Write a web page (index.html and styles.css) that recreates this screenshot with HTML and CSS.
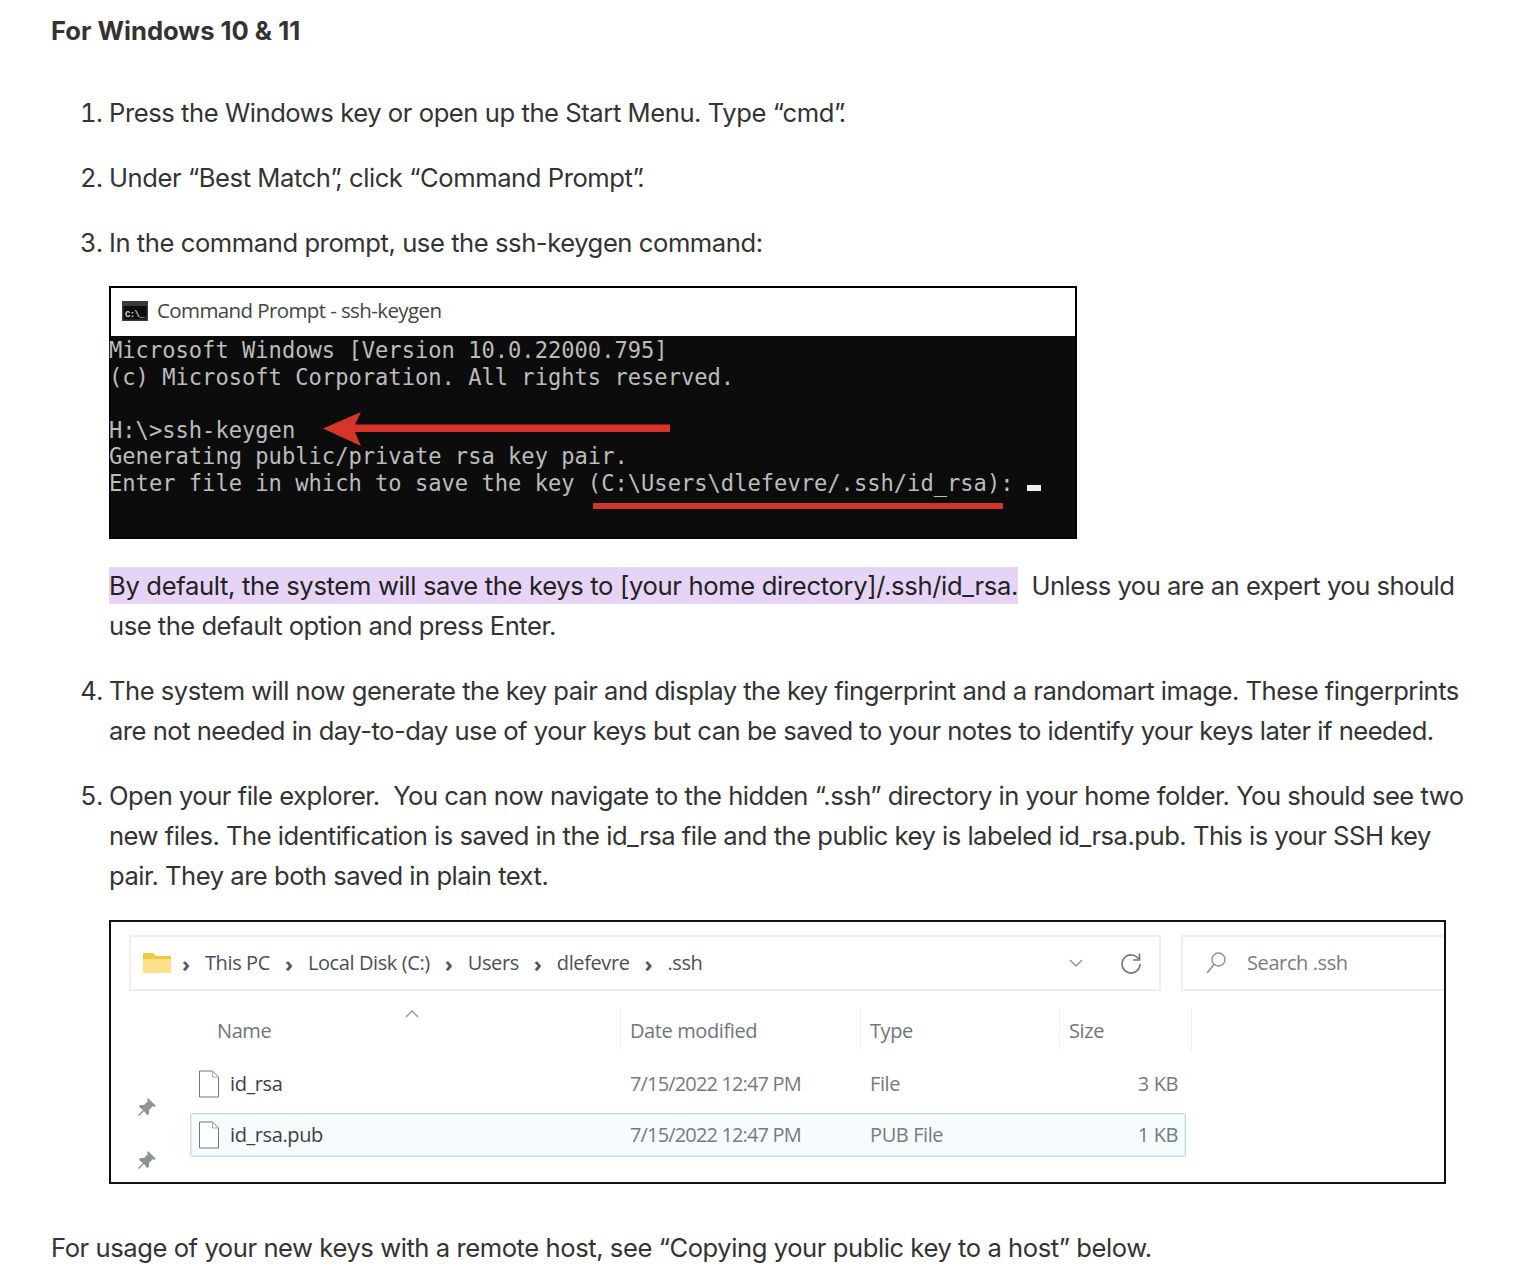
FILE: index.html
```html
<!DOCTYPE html>
<html lang="en">
<head>
<meta charset="utf-8">
<title>For Windows 10 &amp; 11</title>
<link rel="stylesheet" href="styles.css">
</head>
<body>
<main class="doc">
  <h3 class="heading">For Windows 10 &amp; 11</h3>
  <ol class="steps">
    <li>Press the Windows key or open up the Start Menu. Type “cmd<span class="kern">”</span>.</li>
    <li>Under “Best Match<span class="kern">”</span>, click “Command Prompt<span class="kern">”</span>.</li>
    <li>In the command prompt, use the ssh-keygen command:
      <figure class="terminal">
        <div class="term-title">
          <svg class="term-icon" width="26" height="20" viewBox="0 0 26 20"><rect width="26" height="20" fill="#3a3a3a"/><rect x="1.5" y="5" width="23" height="13.5" fill="#0c0c0c"/><text x="3" y="15.5" class="term-icon-text">C:\_</text></svg>
          <span>Command Prompt - ssh-keygen</span>
        </div>
        <pre class="term-body">Microsoft Windows [Version 10.0.22000.795]
(c) Microsoft Corporation. All rights reserved.

H:\&gt;ssh-keygen
Generating public/private rsa key pair.
Enter file in which to save the key (C:\Users\dlefevre/.ssh/id_rsa): <span class="cursor"></span></pre>
        <svg class="term-marks" width="968" height="253" viewBox="0 0 968 253">
          <path d="M214 142.500 L252 126 L246 138.500 H561 V146 H246 L252 160 Z" fill="#d8352a"/>
          <rect x="484" y="217" width="410" height="6" fill="#d0352c"/>
        </svg>
      </figure>
      <p class="after"><mark class="hl">By default, the system will save the keys to [your home directory]/.ssh/id_rsa.</mark>&nbsp; Unless you are an expert you should use the default option and press Enter.</p>
    </li>
    <li class="long">The system will now generate the key pair and display the key fingerprint and a randomart image. These fingerprints are not needed in day-to-day use of your keys but can be saved to your notes to identify your keys later if needed.</li>
    <li class="long">Open your file explorer.&nbsp; You can now navigate to the hidden “.ssh” directory in your home folder. You should see two new files. The identification is saved in the id_rsa file and the public key is labeled id_rsa.pub. This is your SSH key pair. They are both saved in plain text.
      <figure class="explorer">
        <div class="bars">
          <div class="address">
            <svg class="folder" width="28" height="22" viewBox="0 0 28 22"><path d="M0 2a1 1 0 0 1 1-1h9l3 3h14a1 1 0 0 1 1 1v15a1 1 0 0 1-1 1H1a1 1 0 0 1-1-1z" fill="#f0c83e"/><path d="M0 7h28v13a1 1 0 0 1-1 1H1a1 1 0 0 1-1-1z" fill="#fbe28a"/></svg>
            <span class="chev">›</span><span>This PC</span>
            <span class="chev">›</span><span>Local Disk (C:)</span>
            <span class="chev">›</span><span>Users</span>
            <span class="chev">›</span><span>dlefevre</span>
            <span class="chev">›</span><span>.ssh</span>
            <svg class="drop" width="14" height="8" viewBox="0 0 14 8"><path d="M1 1l6 6 6-6" fill="none" stroke="#8b8f94" stroke-width="1.4"/></svg>
            <svg class="refresh" width="24" height="24" viewBox="0 0 24 24"><path d="M19.5 8A9 9 0 1 0 21 13" fill="none" stroke="#777" stroke-width="1.7"/><path d="M20.500 2.500V9H14" fill="none" stroke="#777" stroke-width="1.7"/></svg>
          </div>
          <div class="search">
            <svg width="22" height="24" viewBox="0 0 22 24"><circle cx="13.500" cy="8.500" r="6.500" fill="none" stroke="#8b8f94" stroke-width="1.4"/><path d="M9 13.500L2 22" stroke="#8b8f94" stroke-width="1.6"/></svg>
            <span>Search .ssh</span>
          </div>
        </div>
        <div class="listing">
          <div class="pins">
            <svg class="pin" width="20" height="20" viewBox="0 0 20 20"><path d="M11 1l8 8-2 1-1-1-4 4 0 4-2 1-3-4-5 5-1-1 5-5-4-3 1-2h4l4-4-1-1z" fill="#8d9399"/></svg>
            <svg class="pin" width="20" height="20" viewBox="0 0 20 20"><path d="M11 1l8 8-2 1-1-1-4 4 0 4-2 1-3-4-5 5-1-1 5-5-4-3 1-2h4l4-4-1-1z" fill="#8d9399"/></svg>
          </div>
          <div class="table">
            <div class="row head">
              <span class="name-head">Name<svg class="sort" width="14" height="8" viewBox="0 0 14 8"><path d="M1 7l6-6 6 6" fill="none" stroke="#9a9ea3" stroke-width="1.5"/></svg></span>
              <span class="col">Date modified</span><span class="col">Type</span><span class="col col-last">Size</span>
            </div>
            <div class="row">
              <span class="name"><svg width="22" height="28" viewBox="0 0 22 28"><path d="M1.500 1h13l6 6v20h-19z" fill="#fff" stroke="#777"/><path d="M14.500 1v6h6" fill="none" stroke="#aaa"/></svg>id_rsa</span>
              <span class="date">7/15/2022 12:47 PM</span><span>File</span><span class="size">3 KB</span>
            </div>
            <div class="row selected">
              <span class="name"><svg width="22" height="28" viewBox="0 0 22 28"><path d="M1.500 1h13l6 6v20h-19z" fill="#fff" stroke="#777"/><path d="M14.500 1v6h6" fill="none" stroke="#aaa"/></svg>id_rsa.pub</span>
              <span class="date">7/15/2022 12:47 PM</span><span>PUB File</span><span class="size">1 KB</span>
            </div>
          </div>
        </div>
      </figure>
    </li>
  </ol>
  <p class="footer">For usage of your new keys with a remote host, see “Copying your public key to a host” below.</p>
</main>
</body>
</html>
```
FILE: styles.css
```css
* { box-sizing: border-box; }
html, body { margin: 0; background: #fff; }
body { font-family: Inter, "Liberation Sans", sans-serif; color: #333; font-size: 25.6px; line-height: 40px; letter-spacing: -0.44px; height: 1277px; overflow: hidden; }
.doc { padding: 11px 0 0 51px; width: 1475px; }
.heading { margin: 0 0 42px; font-size: 25.6px; line-height: 40px; font-weight: 700; letter-spacing: 0; }
.steps { margin: 0; padding: 0 0 0 58px; }
.steps li { margin: 0 0 25px; }
.steps .long { letter-spacing: -0.5px; }
.kern { letter-spacing: -6.5px; }
.terminal { position: relative; margin: 23px 0 0; width: 968px; height: 253px; background: #0c0c0c; border: 2px solid #000; display: flex; flex-direction: column; letter-spacing: 0; }
.term-title { height: 48px; background: #fff; display: flex; align-items: center; gap: 9px; padding: 0 0 3px 11px; font-family: "Open Sans", sans-serif; font-size: 20.5px; letter-spacing: -0.6px; color: #444; line-height: 1; }
.term-icon-text { font-family: "Liberation Mono", monospace; font-size: 9px; font-weight: 700; fill: #ddd; }
.term-body { margin: 0 0 0 -2px; padding: 1px 0 0; font-family: "DejaVu Sans Mono", monospace; font-size: 22.1px; line-height: 26.6px; color: #bcbcbc; overflow: hidden; }
.cursor { display: inline-block; width: 14px; height: 6px; background: #eee; }
.term-marks { position: absolute; left: -2px; top: -2px; }
.after { margin: 27px 0 0; letter-spacing: -0.5px; }
.hl { background: #e5d4f6; color: #222; padding: 3px 0; letter-spacing: -0.34px; }
.explorer { margin: 24px 0 0; width: 1337px; height: 264px; border: 2px solid #111; padding: 13px 0 0 18px; font-family: "Open Sans", sans-serif; font-size: 20px; line-height: 28px; letter-spacing: -0.4px; color: #4a4f55; overflow: hidden; }
.bars { display: flex; gap: 20px; height: 56px; }
.address, .search { border: 2px solid #eceef0; display: flex; align-items: center; height: 56px; }
.address { width: 1032px; padding-left: 12px; gap: 15px; }
.search { flex: 1; border-right: 0; padding-left: 22px; gap: 20px; color: #777c82; }
.chev { width: 8px; color: #555; font-size: 22px; font-weight: 700; line-height: 1; }
.folder { margin-right: -4px; }
.drop { margin-left: auto; }
.refresh { margin: 0 16px 0 21px; }
.listing { display: flex; margin-top: 17px; }
.pins { width: 61px; display: flex; flex-direction: column; gap: 33px; padding: 89px 0 0 8px; flex: none; }
.table { width: 996px; }
.row { display: grid; grid-template-columns: 430px 240px 199px 109px; align-items: center; height: 44px; color: #757a80; margin-bottom: 7px; border: 1px solid transparent; padding-left: 9px; }
.head { margin-bottom: 10px; color: #6f757c; border: 0; padding: 2px 0 0 10px; }
.col { position: relative; display: flex; align-items: center; height: 100%; }
.col::before { content: ""; position: absolute; left: -10px; top: -2px; bottom: 0; width: 1px; background: #eef0f2; }
.col-last::after { content: ""; position: absolute; right: -14px; top: -2px; bottom: 0; width: 1px; background: #eef0f2; }
.name-head { position: relative; display: flex; align-items: center; height: 100%; padding-left: 17px; }
.sort { position: absolute; left: 205px; top: 0; }
.name { display: flex; align-items: center; gap: 10px; margin-left: -2px; color: #3c4045; }
.date { letter-spacing: -0.85px; }
.size { text-align: right; }
.selected { background: #f6fbfd; border: 1px solid #bfdde9; box-shadow: 0 0 0 1px #e2f0f5 inset; border-radius: 2px; }
.footer { margin: 44px 0 0; }
```
